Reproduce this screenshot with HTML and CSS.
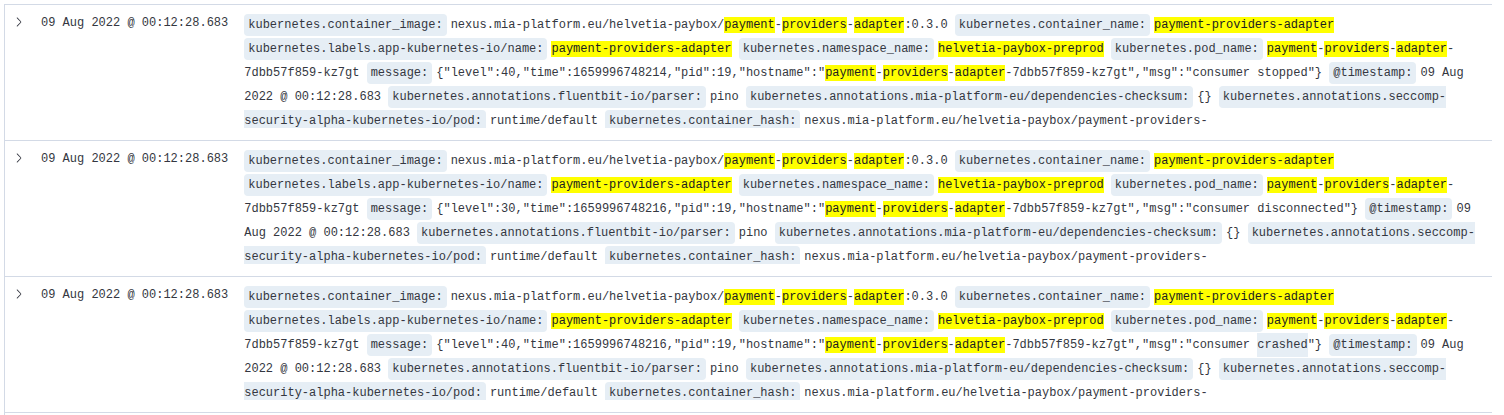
FILE: index.html
```
<!DOCTYPE html>
<html lang="en">
<head>
<meta charset="utf-8">
<title>Discover</title>
<link rel="stylesheet" href="styles.css">
</head>
<body>
<div class="doc-table">
  <div class="doc-row">
    <div class="toggle-cell"><svg class="chevron" width="12" height="12" viewBox="0 0 16 16"><path d="M5.157 13.069l4.611-4.685a.546.546 0 000-.768L5.158 2.93a.552.552 0 010-.771.53.53 0 01.759 0l4.61 4.684c.631.641.63 1.672 0 2.312l-4.61 4.684a.53.53 0 01-.76 0 .552.552 0 010-.771z"/></svg></div>
    <div class="time-cell">09 Aug 2022 @ 00:12:28.683</div>
    <div class="source-cell">
      <dl class="source">
        <dt>kubernetes.container_image:</dt><dd>nexus.mia-platform.eu/helvetia-paybox/<mark>payment</mark>-<mark>providers</mark>-<mark>adapter</mark>:0.3.0</dd>
        <dt>kubernetes.container_name:</dt><dd><mark>payment-providers-adapter</mark></dd>
        <dt>kubernetes.labels.app-kubernetes-io/name:</dt><dd><mark>payment-providers-adapter</mark></dd>
        <dt>kubernetes.namespace_name:</dt><dd><mark>helvetia-paybox-preprod</mark></dd>
        <dt>kubernetes.pod_name:</dt><dd><mark>payment</mark>-<mark>providers</mark>-<mark>adapter</mark>-7dbb57f859-kz7gt</dd>
        <dt>message:</dt><dd>{"level":40,"time":1659996748214,"pid":19,"hostname":"<mark>payment</mark>-<mark>providers</mark>-<mark>adapter</mark>-7dbb57f859-kz7gt","msg":"consumer stopped"}</dd>
        <dt>@timestamp:</dt><dd>09 Aug 2022 @ 00:12:28.683</dd>
        <dt>kubernetes.annotations.fluentbit-io/parser:</dt><dd>pino</dd>
        <dt>kubernetes.annotations.mia-platform-eu/dependencies-checksum:</dt><dd>{}</dd>
        <dt>kubernetes.annotations.seccomp-security-alpha-kubernetes-io/pod:</dt><dd>runtime/default</dd>
        <dt>kubernetes.container_hash:</dt><dd>nexus.mia-platform.eu/helvetia-paybox/payment-providers-adapter@sha256:3f9c1a7e2b5d4c8f6a0e9b7d1c3a5f8e2d4b6c9a1e3f5d7b9c2a4e6f8d0b1c3a</dd>
        <dt>kubernetes.docker_id:</dt><dd>8e1f2a3b4c5d6e7f8a9b0c1d2e3f4a5b6c7d8e9f0a1b2c3d4e5f6a7b8c9d0e1f</dd>
        <dt>kubernetes.host:</dt><dd>ip-10-0-12-34.eu-west-1.compute.internal</dd>
      </dl>
    </div>
  </div>

  <div class="doc-row">
    <div class="toggle-cell"><svg class="chevron" width="12" height="12" viewBox="0 0 16 16"><path d="M5.157 13.069l4.611-4.685a.546.546 0 000-.768L5.158 2.93a.552.552 0 010-.771.53.53 0 01.759 0l4.61 4.684c.631.641.63 1.672 0 2.312l-4.61 4.684a.53.53 0 01-.76 0 .552.552 0 010-.771z"/></svg></div>
    <div class="time-cell">09 Aug 2022 @ 00:12:28.683</div>
    <div class="source-cell">
      <dl class="source">
        <dt>kubernetes.container_image:</dt><dd>nexus.mia-platform.eu/helvetia-paybox/<mark>payment</mark>-<mark>providers</mark>-<mark>adapter</mark>:0.3.0</dd>
        <dt>kubernetes.container_name:</dt><dd><mark>payment-providers-adapter</mark></dd>
        <dt>kubernetes.labels.app-kubernetes-io/name:</dt><dd><mark>payment-providers-adapter</mark></dd>
        <dt>kubernetes.namespace_name:</dt><dd><mark>helvetia-paybox-preprod</mark></dd>
        <dt>kubernetes.pod_name:</dt><dd><mark>payment</mark>-<mark>providers</mark>-<mark>adapter</mark>-7dbb57f859-kz7gt</dd>
        <dt>message:</dt><dd>{"level":30,"time":1659996748216,"pid":19,"hostname":"<mark>payment</mark>-<mark>providers</mark>-<mark>adapter</mark>-7dbb57f859-kz7gt","msg":"consumer disconnected"}</dd>
        <dt>@timestamp:</dt><dd>09 Aug 2022 @ 00:12:28.683</dd>
        <dt>kubernetes.annotations.fluentbit-io/parser:</dt><dd>pino</dd>
        <dt>kubernetes.annotations.mia-platform-eu/dependencies-checksum:</dt><dd>{}</dd>
        <dt>kubernetes.annotations.seccomp-security-alpha-kubernetes-io/pod:</dt><dd>runtime/default</dd>
        <dt>kubernetes.container_hash:</dt><dd>nexus.mia-platform.eu/helvetia-paybox/payment-providers-adapter@sha256:3f9c1a7e2b5d4c8f6a0e9b7d1c3a5f8e2d4b6c9a1e3f5d7b9c2a4e6f8d0b1c3a</dd>
        <dt>kubernetes.docker_id:</dt><dd>8e1f2a3b4c5d6e7f8a9b0c1d2e3f4a5b6c7d8e9f0a1b2c3d4e5f6a7b8c9d0e1f</dd>
        <dt>kubernetes.host:</dt><dd>ip-10-0-12-34.eu-west-1.compute.internal</dd>
      </dl>
    </div>
  </div>

  <div class="doc-row">
    <div class="toggle-cell"><svg class="chevron" width="12" height="12" viewBox="0 0 16 16"><path d="M5.157 13.069l4.611-4.685a.546.546 0 000-.768L5.158 2.93a.552.552 0 010-.771.53.53 0 01.759 0l4.61 4.684c.631.641.63 1.672 0 2.312l-4.61 4.684a.53.53 0 01-.76 0 .552.552 0 010-.771z"/></svg></div>
    <div class="time-cell">09 Aug 2022 @ 00:12:28.683</div>
    <div class="source-cell">
      <dl class="source">
        <dt>kubernetes.container_image:</dt><dd>nexus.mia-platform.eu/helvetia-paybox/<mark>payment</mark>-<mark>providers</mark>-<mark>adapter</mark>:0.3.0</dd>
        <dt>kubernetes.container_name:</dt><dd><mark>payment-providers-adapter</mark></dd>
        <dt>kubernetes.labels.app-kubernetes-io/name:</dt><dd><mark>payment-providers-adapter</mark></dd>
        <dt>kubernetes.namespace_name:</dt><dd><mark>helvetia-paybox-preprod</mark></dd>
        <dt>kubernetes.pod_name:</dt><dd><mark>payment</mark>-<mark>providers</mark>-<mark>adapter</mark>-7dbb57f859-kz7gt</dd>
        <dt>message:</dt><dd>{"level":40,"time":1659996748216,"pid":19,"hostname":"<mark>payment</mark>-<mark>providers</mark>-<mark>adapter</mark>-7dbb57f859-kz7gt","msg":"consumer <span class="hovered">crashed</span>"}</dd>
        <dt>@timestamp:</dt><dd>09 Aug 2022 @ 00:12:28.683</dd>
        <dt>kubernetes.annotations.fluentbit-io/parser:</dt><dd>pino</dd>
        <dt>kubernetes.annotations.mia-platform-eu/dependencies-checksum:</dt><dd>{}</dd>
        <dt>kubernetes.annotations.seccomp-security-alpha-kubernetes-io/pod:</dt><dd>runtime/default</dd>
        <dt>kubernetes.container_hash:</dt><dd>nexus.mia-platform.eu/helvetia-paybox/payment-providers-adapter@sha256:3f9c1a7e2b5d4c8f6a0e9b7d1c3a5f8e2d4b6c9a1e3f5d7b9c2a4e6f8d0b1c3a</dd>
        <dt>kubernetes.docker_id:</dt><dd>8e1f2a3b4c5d6e7f8a9b0c1d2e3f4a5b6c7d8e9f0a1b2c3d4e5f6a7b8c9d0e1f</dd>
        <dt>kubernetes.host:</dt><dd>ip-10-0-12-34.eu-west-1.compute.internal</dd>
      </dl>
    </div>
  </div>
</div>
</body>
</html>
```

FILE: styles.css
```
html, body {
  margin: 0;
  background: #ffffff;
}

body {
  padding: 4px 0 0 4px;
  font-family: "Liberation Mono", "DejaVu Sans Mono", monospace;
  font-size: 12px;
  color: #343741;
  overflow: hidden;
}

.doc-table {
  width: 1487px;
  border-top: 1px solid #d3dae6;
  border-left: 1px solid #d3dae6;
  min-height: 420px;
}

.doc-row {
  display: flex;
  align-items: flex-start;
  border-bottom: 1px solid #d3dae6;
}

.toggle-cell {
  padding: 11px 8px 0 8px;
  line-height: 0;
}

.chevron {
  display: block;
  fill: #343741;
}

.time-cell {
  padding: 9px 8px 7px 8px;
  line-height: 18px;
  white-space: nowrap;
  color: #343741;
}

.source-cell {
  flex: 1;
  min-width: 0;
  padding: 8px 8px 12px 8px;
}

.source {
  margin: 0;
  max-height: 115px;
  overflow: hidden;
  line-height: 24px;
  word-break: break-word;
}

.source dt,
.source dd {
  display: inline;
  margin: 0;
}

.source dt {
  background-color: #e6eef5;
  padding: 4px 4px;
  margin-right: 4px;
  border-radius: 4px;
}

.source mark {
  background-color: #ffff00;
  color: #1a1c21;
  padding: 1px 0;
}

.hovered {
  display: inline-block;
  background-color: #e6eef5;
}
```
